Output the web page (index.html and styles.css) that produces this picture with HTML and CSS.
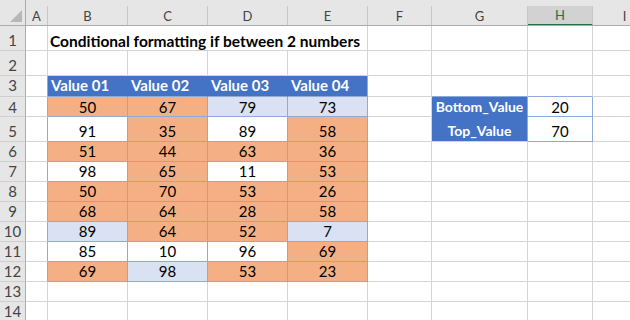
FILE: index.html
```html
<!DOCTYPE html>
<html lang="en">
<head>
  <meta charset="UTF-8">
  <title>Conditional formatting if between 2 numbers</title>
  <link rel="stylesheet" href="styles.css">
</head>
<body>
  <div class="sheet">
    <!-- column headers -->
    <div class="corner"><span class="corner-tri"></span></div>
    <div class="colhead"><span>A</span></div>
    <div class="colhead"><span>B</span></div>
    <div class="colhead"><span>C</span></div>
    <div class="colhead"><span>D</span></div>
    <div class="colhead"><span>E</span></div>
    <div class="colhead"><span>F</span></div>
    <div class="colhead"><span>G</span></div>
    <div class="colhead active"><span>H</span></div>
    <div class="colhead"><span>I</span></div>

    <!-- row 1 -->
    <div class="rowhead">1</div>
    <div class="cell"></div>
    <div class="cell title">Conditional formatting if between 2 numbers</div>
    <div class="cell"></div><div class="cell"></div><div class="cell"></div><div class="cell"></div>

    <!-- row 2 -->
    <div class="rowhead">2</div>
    <div class="cell"></div>
    <div class="cell"></div><div class="cell"></div><div class="cell"></div><div class="cell"></div>
    <div class="cell"></div><div class="cell"></div><div class="cell"></div><div class="cell"></div>

    <!-- row 3 -->
    <div class="rowhead r3">3</div>
    <div class="cell edge"></div>
    <div class="cell thead r3">Value 01</div>
    <div class="cell thead r3">Value 02</div>
    <div class="cell thead r3">Value 03</div>
    <div class="cell thead last r3">Value 04</div>
    <div class="cell"></div>
    <div class="cell above"></div>
    <div class="cell above"></div>
    <div class="cell"></div>

    <!-- row 4 -->
    <div class="rowhead r4">4</div>
    <div class="cell edge"></div>
    <div class="cell tb hit r4">50</div>
    <div class="cell tb hit r4">67</div>
    <div class="cell tb band r4">79</div>
    <div class="cell tb band r4">73</div>
    <div class="cell"></div>
    <div class="cell label top r4">Bottom_Value</div>
    <div class="cell input r4">20</div>
    <div class="cell"></div>

    <!-- row 5 -->
    <div class="rowhead">5</div>
    <div class="cell edge"></div>
    <div class="cell tb">91</div>
    <div class="cell tb hit">35</div>
    <div class="cell tb">89</div>
    <div class="cell tb hit">58</div>
    <div class="cell"></div>
    <div class="cell label">Top_Value</div>
    <div class="cell input">70</div>
    <div class="cell"></div>

    <!-- row 6 -->
    <div class="rowhead">6</div>
    <div class="cell edge"></div>
    <div class="cell tb hit">51</div>
    <div class="cell tb hit">44</div>
    <div class="cell tb hit">63</div>
    <div class="cell tb hit">36</div>
    <div class="cell"></div><div class="cell"></div><div class="cell"></div><div class="cell"></div>

    <!-- row 7 -->
    <div class="rowhead">7</div>
    <div class="cell edge"></div>
    <div class="cell tb">98</div>
    <div class="cell tb hit">65</div>
    <div class="cell tb">11</div>
    <div class="cell tb hit">53</div>
    <div class="cell"></div><div class="cell"></div><div class="cell"></div><div class="cell"></div>

    <!-- row 8 -->
    <div class="rowhead">8</div>
    <div class="cell edge"></div>
    <div class="cell tb hit">50</div>
    <div class="cell tb hit">70</div>
    <div class="cell tb hit">53</div>
    <div class="cell tb hit">26</div>
    <div class="cell"></div><div class="cell"></div><div class="cell"></div><div class="cell"></div>

    <!-- row 9 -->
    <div class="rowhead">9</div>
    <div class="cell edge"></div>
    <div class="cell tb hit">68</div>
    <div class="cell tb hit">64</div>
    <div class="cell tb hit">28</div>
    <div class="cell tb hit">58</div>
    <div class="cell"></div><div class="cell"></div><div class="cell"></div><div class="cell"></div>

    <!-- row 10 -->
    <div class="rowhead">10</div>
    <div class="cell edge"></div>
    <div class="cell tb band">89</div>
    <div class="cell tb hit">64</div>
    <div class="cell tb hit">52</div>
    <div class="cell tb band">7</div>
    <div class="cell"></div><div class="cell"></div><div class="cell"></div><div class="cell"></div>

    <!-- row 11 -->
    <div class="rowhead">11</div>
    <div class="cell edge"></div>
    <div class="cell tb">85</div>
    <div class="cell tb">10</div>
    <div class="cell tb">96</div>
    <div class="cell tb hit">69</div>
    <div class="cell"></div><div class="cell"></div><div class="cell"></div><div class="cell"></div>

    <!-- row 12 -->
    <div class="rowhead">12</div>
    <div class="cell edge"></div>
    <div class="cell tb hit">69</div>
    <div class="cell tb band">98</div>
    <div class="cell tb hit">53</div>
    <div class="cell tb hit">23</div>
    <div class="cell"></div><div class="cell"></div><div class="cell"></div><div class="cell"></div>

    <!-- row 13 -->
    <div class="rowhead">13</div>
    <div class="cell"></div>
    <div class="cell"></div><div class="cell"></div><div class="cell"></div><div class="cell"></div>
    <div class="cell"></div><div class="cell"></div><div class="cell"></div><div class="cell"></div>

    <!-- row 14 -->
    <div class="rowhead">14</div>
    <div class="cell"></div>
    <div class="cell"></div><div class="cell"></div><div class="cell"></div><div class="cell"></div>
    <div class="cell"></div><div class="cell"></div><div class="cell"></div><div class="cell"></div>
  </div>
</body>
</html>
```
FILE: styles.css
```css
/* Excel-like sheet */
:root {
  --grid: #d4d4d4;
  --head-bg: #e6e6e6;
  --head-line: #ababab;
  --blue: #4472c4;
  --tbl-line: #8eaadb;
  --band: #d9e1f2;
  --hit: #f4b084;
  --green: #217346;
}

body {
  margin: 0;
  background: #fff;
  overflow: hidden;
  font-family: 'Lato', 'Open Sans', sans-serif;
  font-size: 15px;
  color: #000;
}

.sheet {
  display: grid;
  grid-template-columns: 26px 22px 80px 80px 80px 80px 64px 96px 65px 64px;
  grid-template-rows: 26px 25px 25px 21px 20px 25px repeat(9, 20px);
  width: 657px;
}

.sheet > div {
  box-sizing: border-box;
  overflow: hidden;
  white-space: nowrap;
}

/* headers */
.corner {
  background: var(--head-bg);
  border-right: 1px solid var(--head-line);
  border-bottom: 1px solid var(--head-line);
  position: relative;
}

.corner-tri {
  position: absolute;
  right: 3px;
  bottom: 3px;
  width: 12px;
  height: 12px;
  background: #b7b7b7;
  clip-path: polygon(100% 0, 100% 100%, 0 100%);
}

.colhead {
  background: var(--head-bg);
  border-bottom: 1px solid var(--head-line);
  padding-top: 6px;
  display: flex;
  font-size: 13px;
  color: #444;
}

.colhead span {
  flex: 1;
  display: flex;
  align-items: center;
  justify-content: center;
  border-right: 1px solid #c6c6c6;
}

.colhead.active span {
  background: #d2d2d2;
  color: var(--green);
  border-bottom: 2px solid var(--green);
  margin-bottom: -1px;
}

.rowhead {
  background: var(--head-bg);
  border-right: 1px solid var(--head-line);
  border-bottom: 1px solid #cfcfcf;
  color: #444;
  display: flex;
  align-items: flex-end;
  justify-content: center;
  line-height: 16px;
  padding-bottom: 2px;
}

/* cells */
.cell {
  border-right: 1px solid var(--grid);
  border-bottom: 1px solid var(--grid);
  display: flex;
  align-items: flex-end;
  justify-content: center;
  line-height: 16px;
  padding-bottom: 2px;
}

.title {
  grid-column: 3 / 7;
  justify-content: flex-start;
  padding-left: 2px;
  font-weight: bold;
  font-size: 15.5px;
  padding-bottom: 1px;
}

.r3 { padding-bottom: 3px; }
.r4 { padding-bottom: 1px; }

.edge { border-right-color: var(--tbl-line); }

.thead {
  background: var(--blue);
  color: #fff;
  font-weight: bold;
  justify-content: flex-start;
  padding-left: 3px;
  border-right-color: var(--blue);
  border-bottom-color: var(--tbl-line);
}

.thead.last { border-right-color: var(--tbl-line); }

.tb { border-color: var(--tbl-line); }
.band { background: var(--band); }
.hit { background: var(--hit); }

.above { border-bottom-color: var(--tbl-line); }

.label {
  background: var(--blue);
  color: #fff;
  font-weight: bold;
  font-size: 14px;
  border-right-color: var(--tbl-line);
}

.label.top { border-bottom-color: var(--blue); }

.input { border-color: var(--tbl-line); }
```
